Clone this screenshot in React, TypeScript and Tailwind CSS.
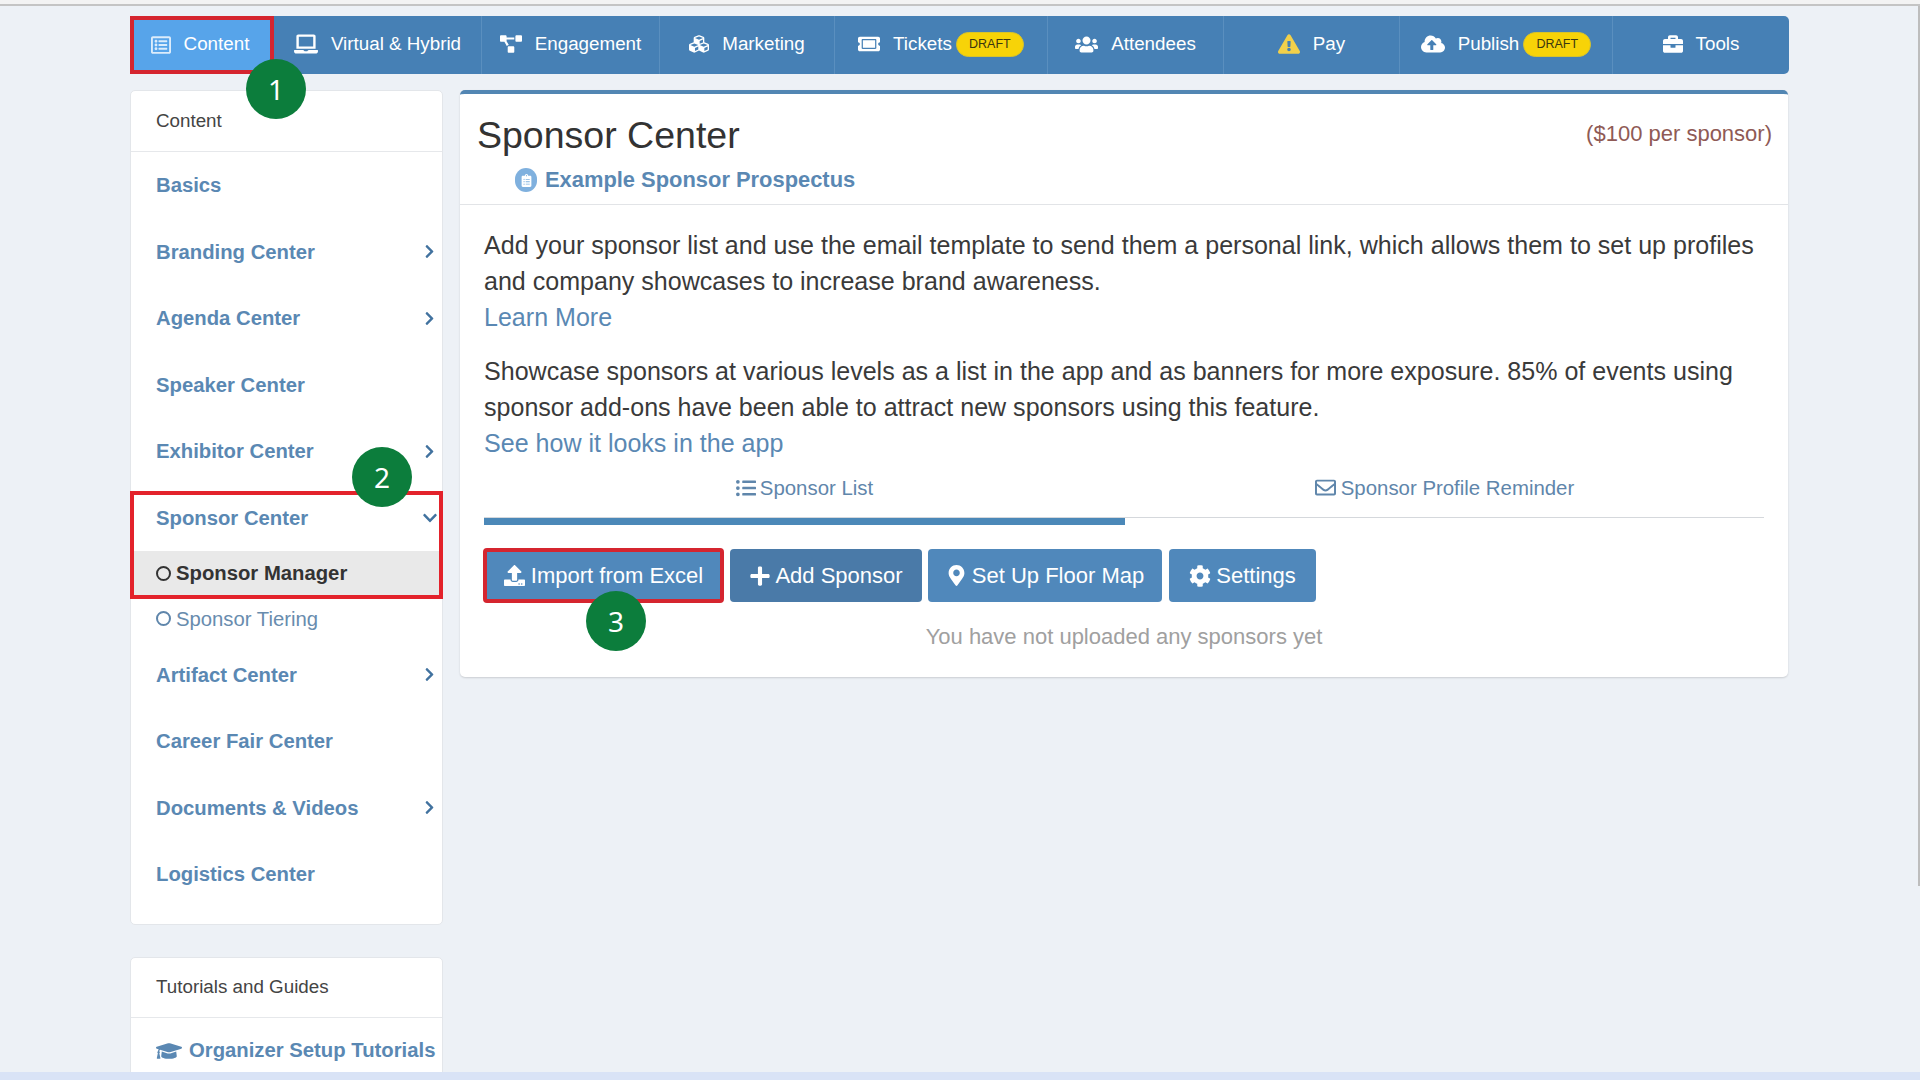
import React from "react";
import { FaRegListAlt, FaLaptop, FaProjectDiagram, FaCubes, FaTicketAlt, FaUsers, FaExclamationTriangle, FaCloudUploadAlt, FaBriefcase, FaChevronRight, FaChevronDown, FaListUl, FaRegEnvelope, FaUpload, FaPlus, FaMapMarkerAlt, FaCog, FaGraduationCap, FaClipboardList } from "react-icons/fa";

const Draft = () => (
  <span className="ml-[4px] w-[68px] h-[25px] rounded-full bg-[#f7d308] border border-[#d8c32a] text-[#3a3610] text-[12.5px] font-normal flex items-center justify-center">DRAFT</span>
);

const nav = [
  { w: "w-[208px]", label: "Virtual & Hybrid", icon: <FaLaptop className="text-[24px]" /> },
  { w: "w-[178px]", label: "Engagement", icon: <FaProjectDiagram className="text-[22px]" /> },
  { w: "w-[175px]", label: "Marketing", icon: <FaCubes className="text-[20px]" /> },
  { w: "w-[213px]", label: "Tickets", icon: <FaTicketAlt className="text-[22px]" />, draft: true },
  { w: "w-[176px]", label: "Attendees", icon: <FaUsers className="text-[23px]" /> },
  { w: "w-[176px]", label: "Pay", icon: <FaExclamationTriangle className="text-[22px] text-[#f2d04a]" /> },
  { w: "w-[213px]", label: "Publish", icon: <FaCloudUploadAlt className="text-[24px]" />, draft: true },
  { w: "w-[176px]", label: "Tools", icon: <FaBriefcase className="text-[20px]" />, last: true },
];

const items: { label: string; chev?: boolean }[] = [
  { label: "Basics" },
  { label: "Branding Center", chev: true },
  { label: "Agenda Center", chev: true },
  { label: "Speaker Center" },
  { label: "Exhibitor Center", chev: true },
];
const items2: { label: string; chev?: boolean }[] = [
  { label: "Artifact Center", chev: true },
  { label: "Career Fair Center" },
  { label: "Documents & Videos", chev: true },
  { label: "Logistics Center" },
];

const SideItem = ({ label, chev }: { label: string; chev?: boolean }) => (
  <div className="h-[66.6px] pl-[25px] pr-[5px] flex items-center justify-between text-[20.3px] font-bold text-[#5a88b3]">
    <span>{label}</span>
    {chev && <FaChevronRight className="text-[15px] text-[#41729f]" />}
  </div>
);

const Circle = ({ n, className }: { n: string; className: string }) => (
  <div className={`absolute w-[60px] h-[60px] rounded-full bg-[#0c7d3c] text-white text-[28px] flex items-center justify-center font-['Noto_Sans',sans-serif] ${className}`}>{n}</div>
);

const Btn = ({ children, className }: { children: React.ReactNode; className: string }) => (
  <div className={`h-[53px] rounded-[4px] text-white text-[22px] flex items-center justify-center ${className}`}>{children}</div>
);

export default function App() {
  return (
    <div className="relative h-[1080px] w-[1920px] overflow-hidden bg-[#edf1f6] flex flex-col font-['Liberation_Sans',Arial,sans-serif]">
      <div className="h-[6px] shrink-0 bg-[#f3f3f3] border-b-[2px] border-[#c4c4c4]" />
      <div className="flex-1 min-h-0 pl-[130px] pt-[10px] pr-[131px] overflow-hidden">
        <nav className="flex h-[58px] w-[1659px] rounded-[5px] bg-[#4680b5] text-white text-[18.8px]">
          <div className="relative w-[144px] h-[58px] bg-[#57a4ea] border-[4px] border-[#d5252f] flex items-center justify-center gap-[13px] pb-[1px] pr-[4px]">
            <FaRegListAlt className="text-[20px] text-[#dcecfb]" />
            <span>Content</span>
          </div>
          {nav.map((n) => (
            <div key={n.label} className={`${n.w} h-[58px] flex items-center justify-center gap-[13px] pb-[2px] ${n.last ? "" : "border-r border-[#5a8fbf]"}`}>
              {n.icon}
              <span className="flex items-center">
                {n.label}
                {n.draft && <Draft />}
              </span>
            </div>
          ))}
        </nav>

        <div className="flex items-start mt-[16px] gap-[17px]">
          <div className="w-[313px] shrink-0 flex flex-col gap-[32px]">
            <div className="h-[835px] bg-white rounded-[5px] border border-[#e3e6ea]">
              <div className="h-[61px] pl-[25px] flex items-center text-[18.8px] text-[#444] border-b border-[#e6e8eb]">Content</div>
              <div className="flex flex-col">
                {items.map((i) => <SideItem key={i.label} {...i} />)}
                <div className="mt-[6.5px] -ml-[1px] -mr-[1px] h-[108px] border-[4px] border-[#e3222b] flex flex-col">
                  <div className="h-[56px] pl-[22px] pr-[1px] pb-[11px] flex items-center justify-between text-[20.3px] font-bold text-[#5a88b3]">
                    <span>Sponsor Center</span>
                    <FaChevronDown className="text-[16px] text-[#41729f]" />
                  </div>
                  <div className="flex-1 bg-[#e9e9e9] pl-[22px] flex items-center gap-[5px] text-[20.3px] font-bold text-[#333]">
                    <span className="w-[15px] h-[15px] rounded-full border-[2px] border-[#333]" />
                    Sponsor Manager
                  </div>
                </div>
                <div className="h-[42px] pl-[25px] pb-[3px] flex items-center gap-[5px] text-[20.3px] text-[#688cae]">
                  <span className="w-[15px] h-[15px] rounded-full border-[2px] border-[#5f86ab]" />
                  Sponsor Tiering
                </div>
                {items2.map((i) => <SideItem key={i.label} {...i} />)}
              </div>
            </div>
            <div className="bg-white rounded-[5px] border border-[#e3e6ea] h-[200px]">
              <div className="h-[60px] pl-[25px] flex items-center text-[18.8px] text-[#444] border-b border-[#e6e8eb]">Tutorials and Guides</div>
              <div className="h-[65px] pl-[25px] flex items-center gap-[7px] text-[20.3px] font-bold text-[#5a88b3]">
                <FaGraduationCap className="text-[26px]" />
                Organizer Setup Tutorials
              </div>
            </div>
          </div>

          <div className="w-[1328px] h-[587px] bg-white rounded-[5px] border-t-[4px] border-[#5286b3] shadow-[0_1px_2px_rgba(0,0,0,0.15)]">
            <div className="h-[111px] border-b border-[#e2e4e7] pl-[17px] pr-[16px]">
              <div className="flex justify-between pt-[20px]">
                <span className="text-[37.5px] leading-[43px] text-[#333]">Sponsor Center</span>
                <span className="text-[22px] text-[#8f5a55] pt-[3px]">($100 per sponsor)</span>
              </div>
              <div className="flex items-center ml-[38px] mt-[7px] gap-[8px] text-[21.9px] font-bold text-[#5a88b3]">
                <span className="w-[22px] h-[24px] rounded-full bg-[#7fb0de] flex items-center justify-center">
                  <FaClipboardList className="text-[13px] text-white" />
                </span>
                Example Sponsor Prospectus
              </div>
            </div>
            <div className="pl-[24px] pr-[24px] pt-[22px] text-[25.05px] leading-[36px] text-[#3a3a3a]">
              <p>Add your sponsor list and use the email template to send them a personal link, which allows them to set up profiles and company showcases to increase brand awareness.</p>
              <p className="text-[#5a88b3]">Learn More</p>
              <p className="mt-[18px]">Showcase sponsors at various levels as a list in the app and as banners for more exposure. 85% of events using sponsor add-ons have been able to attract new sponsors using this feature.</p>
              <p className="text-[#5a88b3]">See how it looks in the app</p>

              <div className="flex mt-[10px] h-[47px] border-b border-[#d5d8dc] text-[20.4px] leading-[30px] text-[#5f86ab]">
                <div className="w-[641px] h-[54px] shrink-0 pb-[14px] border-b-[7px] border-[#4b88b8] flex items-center justify-center gap-[4px]">
                  <FaListUl className="text-[20px]" /> Sponsor List
                </div>
                <div className="flex-1 h-[54px] pb-[14px] border-b-[7px] border-transparent flex items-center justify-center gap-[5px]">
                  <FaRegEnvelope className="text-[21px]" /> Sponsor Profile Reminder
                </div>
              </div>

              <div className="flex mt-[31px] gap-[6px]">
                <Btn className="w-[241px] bg-[#5088bb] border-[4px] border-[#d5252f] gap-[6px] -my-[1px] h-[55px] -ml-[1px]"><FaUpload className="text-[21px]" /> Import from Excel</Btn>
                <Btn className="w-[192px] bg-[#4a7aa8] gap-[4px]"><FaPlus className="text-[22px]" /> Add Sponsor</Btn>
                <Btn className="w-[234px] bg-[#5088bb] gap-[5px]"><FaMapMarkerAlt className="text-[21px]" /> Set Up Floor Map</Btn>
                <Btn className="w-[147px] bg-[#5088bb] gap-[5px] ml-[1px]"><FaCog className="text-[22px]" /> Settings</Btn>
              </div>
              <div className="text-center text-[22px] leading-[30px] text-[#a0a0a0] mt-[20px]">You have not uploaded any sponsors yet</div>
            </div>
          </div>
        </div>
      </div>
      <div className="h-[8px] shrink-0 bg-[#d9e3f6]" />
      <div className="absolute right-0 top-[6px] h-[880px] w-[2px] bg-[#bdbdbd]" />
      <Circle n="1" className="left-[246px] top-[59px]" />
      <Circle n="2" className="left-[352px] top-[447px]" />
      <Circle n="3" className="left-[586px] top-[591px]" />
    </div>
  );
}
